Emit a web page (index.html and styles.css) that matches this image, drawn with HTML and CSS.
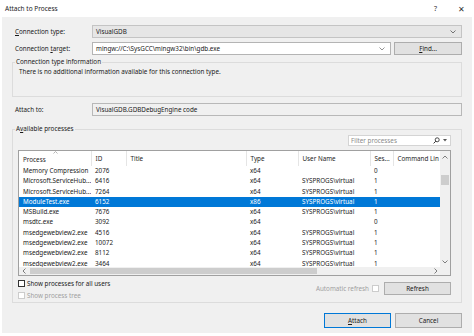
FILE: index.html
```html
<!DOCTYPE html>
<html lang="en">
<head>
    <meta charset="UTF-8">
    <meta name="viewport" content="width=device-width, initial-scale=1.0">
    <title>Attach to Process</title>
    <link rel="stylesheet" href="styles.css">
</head>
<body>
    <div class="window">
        <div class="titlebar">
            <span class="title">Attach to Process</span>
            <span class="caption-btn">?</span>
            <span class="caption-btn close">&#x2715;</span>
        </div>

        <div class="client">
            <div class="field-row">
                <label class="field-label"><u>C</u>onnection type:</label>
                <div class="combo disabled">
                    <span class="value">VisualGDB</span>
                    <svg class="chev" width="6" height="4" viewBox="0 0 6 4"><polyline points="0.5,0.5 3,3 5.5,0.5" fill="none" stroke="#555" stroke-width="0.8"/></svg>
                </div>
            </div>

            <div class="field-row">
                <label class="field-label">Connection <u>t</u>arget:</label>
                <div class="combo editable">
                    <span class="value">mingw://C:\SysGCC\mingw32\bin\gdb.exe</span>
                    <svg class="chev" width="6" height="4" viewBox="0 0 6 4"><polyline points="0.5,0.5 3,3 5.5,0.5" fill="none" stroke="#777" stroke-width="0.8"/></svg>
                </div>
                <button class="btn find"><u>F</u>ind...</button>
            </div>

            <fieldset class="group info-group">
                <legend>Connection type information</legend>
                <p class="info-text">There is no additional information available for this connection type.</p>
            </fieldset>

            <div class="field-row">
                <label class="field-label">Attach to:</label>
                <div class="textbox readonly">VisualGDB.GDBDebugEngine code</div>
            </div>

            <fieldset class="group process-group">
                <legend>A<u>v</u>ailable processes</legend>

                <div class="group-body">
                    <div class="filter-row">
                        <div class="filter">
                            <span class="placeholder">Filter processes</span>
                            <svg width="7" height="7" viewBox="0 0 7 7"><circle cx="4.2" cy="2.8" r="2" fill="none" stroke="#333" stroke-width="0.9"/><line x1="2.8" y1="4.2" x2="0.6" y2="6.4" stroke="#333" stroke-width="1"/></svg>
                            <svg width="4" height="3" viewBox="0 0 4 3"><polygon points="0,0 4,0 2,2.5" fill="#555"/></svg>
                        </div>
                    </div>

                    <div class="listview">
                        <div class="list-body">
                            <table class="proc-table">
                                <colgroup>
                                    <col style="width:72px"><col style="width:35px"><col style="width:120px"><col style="width:52px"><col style="width:72px"><col style="width:23px"><col style="width:70px">
                                </colgroup>
                                <thead>
                                    <tr>
                                        <th>Process<svg class="sort" width="5" height="3" viewBox="0 0 5 3"><polyline points="0.5,2.5 2.5,0.5 4.5,2.5" fill="none" stroke="#999" stroke-width="0.7"/></svg></th>
                                        <th>ID</th>
                                        <th>Title</th>
                                        <th>Type</th>
                                        <th>User Name</th>
                                        <th>Ses...</th>
                                        <th>Command Lin</th>
                                    </tr>
                                </thead>
                                <tbody>
                                    <tr><td>Memory Compression</td><td>2076</td><td></td><td>x64</td><td></td><td>0</td><td></td></tr>
                                    <tr><td>Microsoft.ServiceHub...</td><td>6416</td><td></td><td>x64</td><td>SYSPROGS\virtual</td><td>1</td><td></td></tr>
                                    <tr><td>Microsoft.ServiceHub...</td><td>7264</td><td></td><td>x64</td><td>SYSPROGS\virtual</td><td>1</td><td></td></tr>
                                    <tr class="selected"><td>ModuleTest.exe</td><td>6152</td><td></td><td>x86</td><td>SYSPROGS\virtual</td><td>1</td><td></td></tr>
                                    <tr><td>MSBuild.exe</td><td>7676</td><td></td><td>x64</td><td>SYSPROGS\virtual</td><td>1</td><td></td></tr>
                                    <tr><td>msdtc.exe</td><td>3092</td><td></td><td>x64</td><td></td><td>0</td><td></td></tr>
                                    <tr><td>msedgewebview2.exe</td><td>4516</td><td></td><td>x64</td><td>SYSPROGS\virtual</td><td>1</td><td></td></tr>
                                    <tr><td>msedgewebview2.exe</td><td>10072</td><td></td><td>x64</td><td>SYSPROGS\virtual</td><td>1</td><td></td></tr>
                                    <tr><td>msedgewebview2.exe</td><td>8112</td><td></td><td>x64</td><td>SYSPROGS\virtual</td><td>1</td><td></td></tr>
                                    <tr><td>msedgewebview2.exe</td><td>3464</td><td></td><td>x64</td><td>SYSPROGS\virtual</td><td>1</td><td></td></tr>
                                </tbody>
                            </table>
                        </div>
                        <div class="vscroll">
                            <svg width="6" height="4" viewBox="0 0 6 4"><polyline points="0.5,3.5 3,1 5.5,3.5" fill="none" stroke="#606060" stroke-width="0.8"/></svg>
                            <div class="vtrack"><div class="vthumb"></div></div>
                            <svg width="6" height="4" viewBox="0 0 6 4"><polyline points="0.5,0.5 3,3 5.5,0.5" fill="none" stroke="#606060" stroke-width="0.8"/></svg>
                        </div>
                        <div class="hscroll">
                            <svg width="4" height="6" viewBox="0 0 4 6"><polyline points="3.5,0.5 1,3 3.5,5.5" fill="none" stroke="#606060" stroke-width="0.8"/></svg>
                            <div class="htrack"><div class="hthumb"></div></div>
                            <svg width="4" height="6" viewBox="0 0 4 6"><polyline points="0.5,0.5 3,3 0.5,5.5" fill="none" stroke="#606060" stroke-width="0.8"/></svg>
                        </div>
                        <div class="corner"></div>
                    </div>

                    <div class="options">
                        <div class="checks">
                            <label class="check"><span class="box"></span>Show processes for all users</label>
                            <label class="check disabled"><span class="box"></span>Show process tree</label>
                        </div>
                        <div class="refresh">
                            <label class="check disabled right">Automatic refresh<span class="box"></span></label>
                            <button class="btn">Refresh</button>
                        </div>
                    </div>
                </div>
            </fieldset>

            <div class="dialog-buttons">
                <button class="btn default"><u>A</u>ttach</button>
                <button class="btn">Cancel</button>
            </div>
        </div>
    </div>
</body>
</html>
```

FILE: styles.css
```css
body {
    margin: 0;
    background: #ffffff;
    font-family: "Noto Sans", "Open Sans", sans-serif;
    font-size: 6.3px;
    color: #1a1a1a;
}

.window {
    width: 474px;
    height: 336px;
    display: flex;
    flex-direction: column;
}

.titlebar {
    height: 17px;
    display: flex;
    align-items: center;
    padding-left: 5px;
    background: #ffffff;
}

.title {
    flex: 1;
    font-size: 6.5px;
}

.caption-btn {
    width: 25px;
    text-align: center;
    font-size: 7px;
    color: #333;
}

.caption-btn.close {
    font-size: 8px;
    width: 26px;
}

.client {
    margin: 0 2px;
    height: 316px;
    background: #f0f0f0;
    padding: 0 10px;
    box-sizing: border-box;
    display: flex;
    flex-direction: column;
    overflow: hidden;
}

/* form rows */
.field-row {
    display: flex;
    align-items: center;
    height: 13px;
    padding-left: 3px;
    margin-top: 4px;
}

.field-row:first-child {
    margin-top: 8px;
}

.field-label {
    width: 77px;
    flex: none;
}

.combo,
.textbox {
    flex: 1;
    height: 13px;
    box-sizing: border-box;
    display: flex;
    align-items: center;
    padding: 0 5px 0 3px;
    border: 1px solid #adadad;
}

.combo .value {
    flex: 1;
}

.combo.disabled {
    background: #e6e6e6;
    border-color: #c4c4c4;
}

.combo.editable {
    background: #ffffff;
    border-color: #b4b4b4;
}

.textbox.readonly {
    background: #f0f0f0;
    border-color: #b8b8b8;
}

.btn {
    font-family: inherit;
    font-size: 6.3px;
    color: #1a1a1a;
    background: #e1e1e1;
    border: 1px solid #adadad;
    height: 13px;
    width: 67px;
    padding: 0;
    box-sizing: border-box;
}

.btn.find {
    margin-left: 3px;
    width: 68px;
}

.btn.default {
    border-color: #0078d7;
}

/* group boxes */
.group {
    margin: 0;
    padding: 0;
    border: 1px solid #dcdcdc;
    min-width: 0;
}

.group legend {
    padding: 0 1px;
    margin-left: 2px;
    line-height: 10px;
}

.info-group {
    margin-top: 2px;
    padding-bottom: 19px;
}

.info-text {
    margin: 0 0 0 6px;
    line-height: 10px;
}

.info-group + .field-row {
    margin-top: 6px;
}

.process-group {
    margin-top: 8px;
}

.group-body {
    padding: 0 10px 1px 5px;
}

.filter-row {
    display: flex;
    justify-content: flex-end;
    margin-top: 1px;
}

.filter {
    width: 103px;
    height: 11px;
    box-sizing: border-box;
    background: #ffffff;
    border: 1px solid #d4d4d4;
    display: flex;
    align-items: center;
    gap: 3px;
    padding: 0 3px 0 2px;
}

.placeholder {
    flex: 1;
    color: #8a8a8a;
}

/* list view */
.listview {
    margin-top: 4px;
    height: 126px;
    border: 1px solid #a0a0a0;
    background: #ffffff;
    display: grid;
    grid-template-columns: 1fr 10px;
    grid-template-rows: 1fr 8px;
    box-sizing: border-box;
}

.list-body {
    overflow: hidden;
}

.proc-table {
    table-layout: fixed;
    border-collapse: collapse;
    width: 444px;
    font-size: 6.3px;
}

.proc-table th {
    height: 13px;
    font-weight: normal;
    text-align: left;
    padding: 0 0 0 4px;
    border-right: 1px solid #e5e5e5;
    white-space: nowrap;
    overflow: hidden;
    position: relative;
    color: #1e1e1e;
}

.proc-table th:first-child {
    padding-top: 2px;
}

.sort {
    position: absolute;
    left: 34px;
    top: 0;
}

.proc-table td {
    height: 10.3px;
    line-height: 10.3px;
    padding: 0 0 0 4px;
    white-space: nowrap;
    overflow: hidden;
}

.proc-table tr.selected td {
    background: #0078d7;
    color: #ffffff;
}

.vscroll {
    grid-row: 1;
    grid-column: 2;
    background: #f0f0f0;
    display: flex;
    flex-direction: column;
    align-items: center;
    padding: 4px 0 3px;
}

.vtrack {
    flex: 1;
    align-self: stretch;
    padding-top: 16px;
}

.vthumb {
    margin: 0 1px;
    height: 10px;
    background: #cdcdcd;
}

.hscroll {
    grid-row: 2;
    grid-column: 1;
    background: #f0f0f0;
    display: flex;
    align-items: center;
    padding: 0 2px 0 3px;
}

.htrack {
    flex: 1;
    align-self: stretch;
    padding: 1px 0 1px 4px;
}

.hthumb {
    width: 287px;
    height: 100%;
    background: #cdcdcd;
}

.corner {
    grid-row: 2;
    grid-column: 2;
    background: #f0f0f0;
}

/* bottom options */
.options {
    display: flex;
    justify-content: space-between;
    align-items: flex-start;
}

.checks {
    margin-top: 1px;
    display: flex;
    flex-direction: column;
}

.check {
    display: flex;
    align-items: center;
    height: 12px;
    gap: 2px;
}

.box {
    width: 7px;
    height: 7px;
    box-sizing: border-box;
    border: 1px solid #333;
    background: #ffffff;
}

.check.disabled {
    color: #a0a0a0;
}

.check.disabled .box {
    border-color: #cccccc;
}

.refresh {
    display: flex;
    align-items: center;
    gap: 5px;
    margin-top: 6px;
}

.check.right {
    gap: 3px;
}

.dialog-buttons {
    display: flex;
    justify-content: flex-end;
    gap: 4px;
    margin-top: 10px;
}

.dialog-buttons .btn {
    height: 15px;
}
```
